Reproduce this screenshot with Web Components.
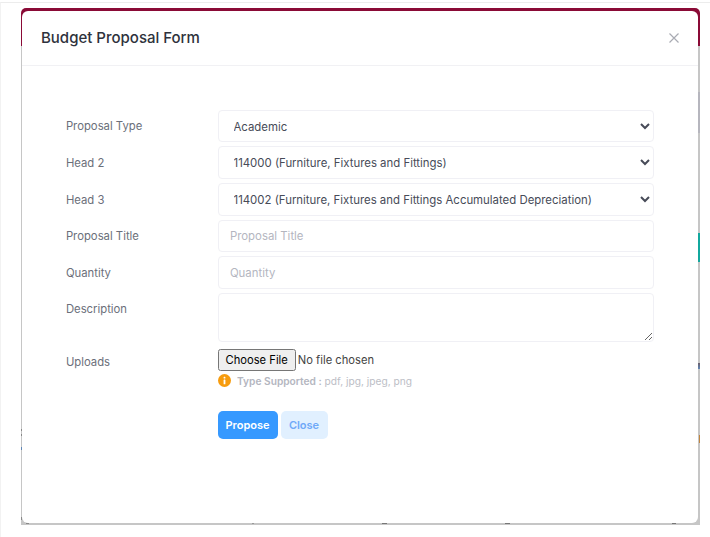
<!DOCTYPE html>
<html><head><meta charset="utf-8">
<style>
html,body{margin:0;padding:0;background:#fff;height:537px;overflow:hidden}
body{font-family:"Inter","Liberation Sans",sans-serif}
</style></head><body>
<template id="t-shell"><style>
:host{display:block;box-sizing:border-box;width:710px;height:537px;padding:2px 0 0 0;background:#fff}
.page{box-sizing:border-box;height:535px;border-top:1.5px solid #ececec;border-left:1.5px solid #f2f2f2;padding:4.5px 0 0 19.5px}
.frame{box-sizing:border-box;width:679px;height:517.5px;border-radius:5px 5px 0 0;padding:3px 2px 2.5px 1px;
background:
 linear-gradient(#8a0a36,#8a0a36) 0 0/100% 38px no-repeat;
background-color:#c6c6c6;position:relative}
.marks{position:absolute;inset:0;pointer-events:none;background-repeat:no-repeat;background-image:
 linear-gradient(#b6b6be,#b6b6be),linear-gradient(#13a89e,#13a89e),linear-gradient(#6a5f6c,#5f86b5),linear-gradient(#c0853f,#c0853f),
 linear-gradient(#888,#888),linear-gradient(#888,#888),linear-gradient(#5f86b5,#5f86b5),linear-gradient(#888,#888),
 linear-gradient(#8a8a8a,#8a8a8a),linear-gradient(#777,#777),linear-gradient(#777,#777),linear-gradient(#777,#777),linear-gradient(#999,#999);
 background-size:2px 41px,2px 29px,2px 6px,1px 8px,1px 2px,1px 2px,1px 3px,1px 3px,3px 1px,5px 1px,5px 1px,4px 1px,2px 1px;
 background-position:677px 84px,677px 225px,677px 355px,678px 427px,0 421px,0 426px,0 439px,0 509px,5px 515px,361px 515px,484px 515px,651px 515px,231px 515px}
</style><div class="page"><div class="frame"><slot></slot><div class="marks"></div></div></div></template>

<template id="t-modal"><style>
:host{display:flex;flex-direction:column;height:100%;background:#fff;border-radius:6px;color:#2b2b3a;position:relative}
header{height:55px;box-sizing:border-box;border-bottom:1px solid #f1f1f4;display:flex;align-items:center;justify-content:space-between;padding:0 19px 0 19.5px}
h1{margin:0;font:500 15px/22px "Inter","Liberation Sans",sans-serif;color:#2e323c}
svg{display:block}
main{padding:44.4px 44px 0 44px}
</style><header><h1><slot name="title"></slot></h1><svg width="10" height="10" viewBox="0 0 10 10"><path d="M.5.5l9 9M9.5.5l-9 9" stroke="#a9abb3" stroke-width="1.2" fill="none"/></svg></header><main><slot></slot></main></template>

<template id="t-row"><style>
:host{display:grid;grid-template-columns:152px 436px;margin-bottom:4px;font:400 11.3px/16px "Inter","Liberation Sans",sans-serif;color:#6b6f7a}
.l{padding-top:8.6px;padding-left:.4px}
</style><div class="l"><slot name="label"></slot></div><div><slot></slot></div></template>

<template id="t-select"><style>
:host{display:block}
select{display:block;box-sizing:border-box;width:436px;height:32.6px;padding:1px 0 0 11px;background:#fff;border:1.5px solid #f0f0f5;border-radius:4px;font:400 11.4px "Inter","Liberation Sans",sans-serif;color:#474b58;outline:0}
</style><select><option></option></select></template>

<template id="t-input"><style>
:host{display:block}
input{display:block;box-sizing:border-box;width:436px;height:32.6px;padding:0 11.4px;background:#fff;border:1.5px solid #f0f0f5;border-radius:4px;font:400 11.4px "Inter","Liberation Sans",sans-serif;outline:0}
input::placeholder{color:#b4b6bf;opacity:1}
</style><input></template>

<template id="t-area"><style>
:host{display:block}
textarea{display:block;box-sizing:border-box;width:436px;height:49px;background:#fff;border:1.5px solid #f0f0f5;border-radius:4px;outline:0;margin:0}
</style><textarea></textarea></template>

<template id="t-upload"><style>
:host{display:block;padding-top:3px;font:400 10.2px/16px "Inter","Liberation Sans",sans-serif;color:#bcbec6}
input{display:block;font:400 11.2px "Inter","Liberation Sans",sans-serif;color:#444;margin:0;height:22px;width:300px}
input::file-selector-button{height:22px;font:inherit;margin-right:2px;padding:1px 6px}
.hint{display:flex;align-items:center;gap:6.5px;height:20px}
b{font-weight:600;font-size:10.2px;color:#b4b6bf}
svg{flex:none;display:block}
</style><input type="file"><div class="hint"><svg width="13" height="13" viewBox="0 0 13 13"><circle cx="6.5" cy="6.5" r="6.5" fill="#f79c0e"/><rect x="5.6" y="2.8" width="1.8" height="1.8" rx=".6" fill="#fff"/><rect x="5.6" y="5.5" width="1.8" height="4.8" rx=".4" fill="#fff"/></svg><span><b>Type Supported :</b> <slot></slot></span></div></template>

<template id="t-actions"><style>
:host{display:flex;gap:3px;margin:20px 0 0 152px}
</style><slot></slot></template>

<template id="t-btn"><style>
:host{display:block;box-sizing:border-box;height:28px;border-radius:5px;font:600 11px/28px "Inter","Liberation Sans",sans-serif;text-align:center}
:host([kind=primary]){width:60px;background:#3699ff;color:#fff}
:host([kind=light]){width:47px;background:#e1f0ff;color:#6fa9f8}
</style><slot></slot></template>

<script>
const def=(n,id,after)=>customElements.define(n,class extends HTMLElement{constructor(){super();const r=this.attachShadow({mode:'open'});r.appendChild(document.getElementById(id).content.cloneNode(true));}connectedCallback(){after&&after(this)}});
def('app-shell','t-shell');def('form-modal','t-modal');def('form-row','t-row');
def('form-select','t-select',e=>{const o=e.shadowRoot.querySelector('option');o.textContent=e.getAttribute('value')});
def('form-input','t-input',e=>{e.shadowRoot.querySelector('input').placeholder=e.getAttribute('placeholder')});
def('form-area','t-area');def('form-upload','t-upload');def('form-actions','t-actions');def('form-btn','t-btn');
</script>

<app-shell><form-modal>
<span slot="title">Budget Proposal Form</span>
<form-row><span slot="label">Proposal Type</span><form-select value="Academic"></form-select></form-row>
<form-row><span slot="label">Head 2</span><form-select value="114000 (Furniture, Fixtures and Fittings)"></form-select></form-row>
<form-row><span slot="label">Head 3</span><form-select value="114002 (Furniture, Fixtures and Fittings Accumulated Depreciation)"></form-select></form-row>
<form-row><span slot="label">Proposal Title</span><form-input placeholder="Proposal Title"></form-input></form-row>
<form-row><span slot="label">Quantity</span><form-input placeholder="Quantity"></form-input></form-row>
<form-row><span slot="label">Description</span><form-area></form-area></form-row>
<form-row><span slot="label">Uploads</span><form-upload>pdf, jpg, jpeg, png</form-upload></form-row>
<form-actions><form-btn kind="primary">Propose</form-btn><form-btn kind="light">Close</form-btn></form-actions>
</form-modal></app-shell>
</body></html>
